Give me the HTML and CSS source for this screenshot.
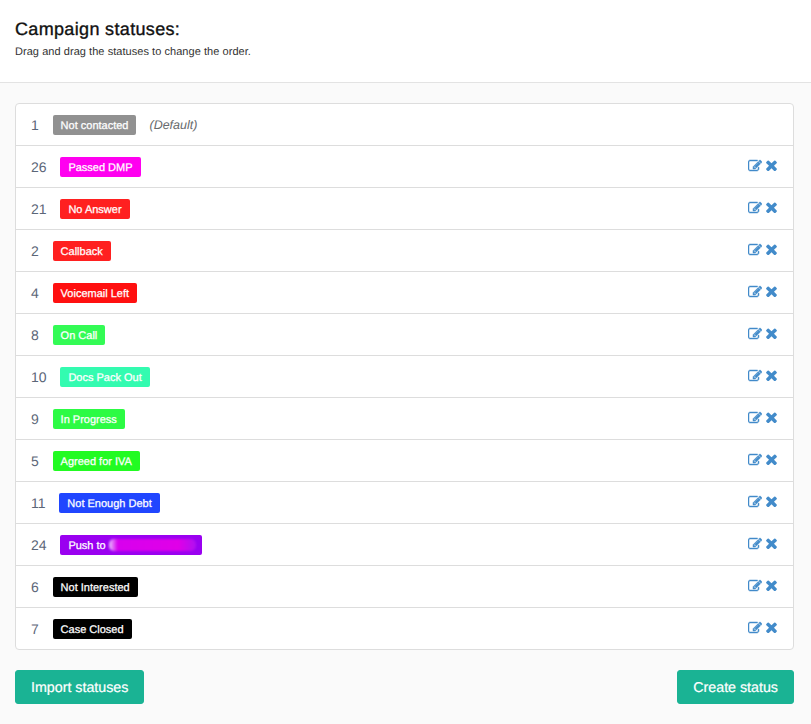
FILE: index.html
```html
<!DOCTYPE html>
<html lang="en">
<head>
<meta charset="utf-8">
<title>Campaign statuses</title>
<link rel="stylesheet" href="styles.css">
</head>
<body>
<svg class="defs" width="0" height="0" aria-hidden="true">
  <symbol id="i-edit" viewBox="0 0 1792 1792"><path d="M888 1184l116-116-152-152-116 116v56h96v96h56zm440-720q-16-16-33 1l-350 350q-17 17-1 33t33-1l350-350q17-17 1-33zm80 594v190q0 119-84.500 203.500t-203.500 84.500h-832q-119 0-203.500-84.500t-84.500-203.500v-832q0-119 84.500-203.500t203.500-84.500h832q63 0 117 25 15 7 18 23 3 17-9 29l-49 49q-14 14-32 8-23-6-45-6h-832q-66 0-113 47t-47 113v832q0 66 47 113t113 47h832q66 0 113-47t47-113v-126q0-13 9-22l64-64q15-15 35-7t20 29zm-96-738l288 288-672 672h-288v-288zm444 132l-92 92-288-288 92-92q28-28 68-28t68 28l152 152q28 28 28 68t-28 68z"/></symbol>
  <symbol id="i-times" viewBox="100 200 1208 1208"><path d="M1298 1202q0 40-28 68l-136 136q-28 28-68 28t-68-28l-294-294-294 294q-28 28-68 28t-68-28l-136-136q-28-28-28-68t28-68l294-294-294-294q-28-28-28-68t28-68l136-136q28-28 68-28t68 28l294 294 294-294q28-28 68-28t68 28l136 136q28 28 28 68t-28 68l-294 294 294 294q28 28 28 68z"/></symbol>
</svg>
<header class="top">
  <h1 class="title">Campaign statuses:</h1>
  <p class="sub">Drag and drag the statuses to change the order.</p>
</header>
<main class="content">
  <ul class="list">
    <li class="row"><span class="num">1</span><span class="badge c-gray">Not contacted</span><em class="default">(Default)</em></li>
    <li class="row"><span class="num">26</span><span class="badge c-magenta">Passed DMP</span><span class="actions"><svg class="ic-edit"><use href="#i-edit"/></svg><svg class="ic-x"><use href="#i-times"/></svg></span></li>
    <li class="row"><span class="num">21</span><span class="badge c-red">No Answer</span><span class="actions"><svg class="ic-edit"><use href="#i-edit"/></svg><svg class="ic-x"><use href="#i-times"/></svg></span></li>
    <li class="row"><span class="num">2</span><span class="badge c-red">Callback</span><span class="actions"><svg class="ic-edit"><use href="#i-edit"/></svg><svg class="ic-x"><use href="#i-times"/></svg></span></li>
    <li class="row"><span class="num">4</span><span class="badge c-red2">Voicemail Left</span><span class="actions"><svg class="ic-edit"><use href="#i-edit"/></svg><svg class="ic-x"><use href="#i-times"/></svg></span></li>
    <li class="row"><span class="num">8</span><span class="badge c-green1">On Call</span><span class="actions"><svg class="ic-edit"><use href="#i-edit"/></svg><svg class="ic-x"><use href="#i-times"/></svg></span></li>
    <li class="row"><span class="num">10</span><span class="badge c-teal">Docs Pack Out</span><span class="actions"><svg class="ic-edit"><use href="#i-edit"/></svg><svg class="ic-x"><use href="#i-times"/></svg></span></li>
    <li class="row"><span class="num">9</span><span class="badge c-green2">In Progress</span><span class="actions"><svg class="ic-edit"><use href="#i-edit"/></svg><svg class="ic-x"><use href="#i-times"/></svg></span></li>
    <li class="row"><span class="num">5</span><span class="badge c-green3">Agreed for IVA</span><span class="actions"><svg class="ic-edit"><use href="#i-edit"/></svg><svg class="ic-x"><use href="#i-times"/></svg></span></li>
    <li class="row"><span class="num">11</span><span class="badge c-blue">Not Enough Debt</span><span class="actions"><svg class="ic-edit"><use href="#i-edit"/></svg><svg class="ic-x"><use href="#i-times"/></svg></span></li>
    <li class="row"><span class="num">24</span><span class="badge c-purple">Push to<span class="smear"></span></span><span class="actions"><svg class="ic-edit"><use href="#i-edit"/></svg><svg class="ic-x"><use href="#i-times"/></svg></span></li>
    <li class="row"><span class="num">6</span><span class="badge c-black">Not Interested</span><span class="actions"><svg class="ic-edit"><use href="#i-edit"/></svg><svg class="ic-x"><use href="#i-times"/></svg></span></li>
    <li class="row"><span class="num">7</span><span class="badge c-black">Case Closed</span><span class="actions"><svg class="ic-edit"><use href="#i-edit"/></svg><svg class="ic-x"><use href="#i-times"/></svg></span></li>
  </ul>
  <div class="buttons">
    <button class="btn">Import statuses</button>
    <button class="btn">Create status</button>
  </div>
</main>
</body>
</html>
```
FILE: styles.css
```css
* { box-sizing: border-box; }
html, body { margin: 0; padding: 0; }
body {
  font-family: "Liberation Sans", Arial, sans-serif;
  background: #fafafa;
  color: #676a6c;
  height: 724px;
  overflow: hidden;
  text-rendering: geometricPrecision;
}
.defs { position: absolute; }
.top {
  height: 83px;
  background: #fff;
  border-bottom: 1px solid #e3e3e3;
  padding: 19px 15px 0;
}
.title {
  margin: 0;
  font-size: 18px;
  line-height: 20px;
  font-weight: 400;
  color: #111;
  letter-spacing: 0.34px;
  -webkit-text-stroke: 0.35px #111;
}
.sub {
  margin: 7px 0 0;
  font-size: 11px;
  line-height: 13px;
  letter-spacing: 0.05px;
  color: #333;
}
.content { padding: 20px 17px 0 15px; }
.list {
  list-style: none;
  margin: 0;
  padding: 0;
  background: #fff;
  border: 1px solid #ddd;
  border-radius: 4px;
}
.row {
  display: flex;
  align-items: center;
  height: 42px;
  padding: 0 15px;
  border-bottom: 1px solid #ddd;
}
.row:last-child { height: 41px; border-bottom: 0; }
.num {
  font-size: 14px;
  line-height: 18px;
  color: #5c6678;
  margin-right: 13.8px;
}
.badge {
  display: flex;
  align-items: center;
  height: 20px;
  padding: 2px 8px 0;
  border-radius: 2px;
  font-size: 11px;
  color: #fff;
  -webkit-text-stroke: 0.25px #fff;
  white-space: nowrap;
}
.smear {
  display: block;
  width: 87px;
  height: 12px;
  margin-left: 3px;
  margin-right: -2px;
  margin-top: -2px;
  border-radius: 5px;
  filter: blur(1px);
  background: linear-gradient(90deg, #e9c3ff 0, #d800ee 10%, #e000e8 80%, #b010f0 100%);
}
.default {
  margin-left: 13px;
  font-size: 12.5px;
  color: #676a6c;
}
.actions { margin-left: auto; display: flex; align-items: flex-start; gap: 4px; padding-right: 1px; position: relative; top: -1px; }
.ic-edit { width: 14px; height: 14px; fill: #428bca; stroke: #428bca; stroke-width: 60; }
.ic-x { width: 11px; height: 11px; margin-top: 1px; fill: #428bca; }
.c-gray { background: #919191; }
.c-magenta { background: #ff00f0; }
.c-red { background: #ff2020; }
.c-red2 { background: #ff1010; }
.c-green1 { background: #33fb55; }
.c-teal { background: #33fbb0; }
.c-green2 { background: #2cfb44; }
.c-green3 { background: #22fb22; }
.c-blue { background: #2046ff; }
.c-purple { background: #9a00f0; }
.c-black { background: #000; }
.buttons { display: flex; justify-content: space-between; margin-top: 20px; }
.btn {
  height: 34px;
  padding: 1px 15px 0;
  border: 1px solid #1ab394;
  border-radius: 3px;
  background: #1ab394;
  color: #fff;
  font: 14.25px/20px "Liberation Sans", Arial, sans-serif;
  text-rendering: geometricPrecision;
  -webkit-text-stroke: 0.2px #fff;
}
```
